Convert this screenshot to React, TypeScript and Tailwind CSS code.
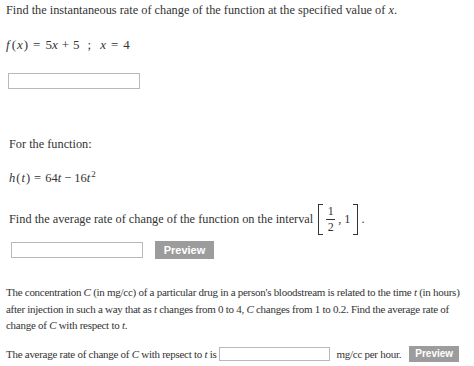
export default function App() {
  const serif = { fontFamily: '"Liberation Serif", "Times New Roman", serif' };
  const sans = { fontFamily: '"Liberation Sans", Arial, sans-serif' };
  return (
    <div className="w-[474px] h-[366px] bg-white text-[#333] text-[12.3px] leading-[16px] overflow-hidden" style={serif}>
      <div className="pl-[6px] pt-[2px]">
        <p>
          Find the instantaneous rate of change of the function at the specified value of <i>x</i>.
        </p>
        <p className="mt-[19px] text-[13px] whitespace-nowrap">
          <i className="mr-[2px]">f</i>(<i className="mx-[1px]">x</i>)<span className="mx-[5px]">=</span>5<i>x</i>
          <span className="mx-[4px]">+</span>5<span className="ml-[8px] mr-[9px]">;</span>
          <i>x</i><span className="mx-[5px]">=</span>4
        </p>
        <div className="mt-[20px] ml-[2px] w-[132px] h-[16px] border border-[#b8b8b8]" />
      </div>

      <div className="pl-[9px] mt-[47px]">
        <p>For the function:</p>
        <p className="mt-[18px] text-[12.5px] whitespace-nowrap">
          <i className="mr-[1px]">h</i>(<i className="mx-[1px]">t</i>)<span className="mx-[4px]">=</span>64<i>t</i>
          <span className="mx-[3px]">&minus;</span>16<i>t</i>
          <span className="relative -top-[5px] ml-[1px] text-[9px]">2</span>
        </p>
        <div className="mt-[17px] flex items-center whitespace-nowrap">
          <span>Find the average rate of change of the function on the interval</span>
          <span className="ml-[5px] inline-flex items-center h-[30px]">
            <span className="w-[5px] h-[31px] border-l-[1.5px] border-t border-b border-[#333]" />
            <span className="mx-[3px] inline-flex flex-col items-center text-[12px] leading-[11px]">
              <span>1</span>
              <span className="w-[9px] border-t border-[#333] my-[2px]" />
              <span>2</span>
            </span>
            <span className="text-[12px]">,</span>
            <span className="ml-[3px]">1</span>
            <span className="ml-[3px] w-[5px] h-[31px] border-r-[1.5px] border-t border-b border-[#333]" />
          </span>
          <span className="ml-[3px]">.</span>
        </div>
        <div className="mt-[7px] flex items-start">
          <div className="ml-[2px] mt-[1px] w-[132px] h-[16px] border border-[#b8b8b8]" />
          <button
            className="ml-[12px] w-[59px] h-[18px] bg-[#9c9c9c] text-white text-[11px] font-bold leading-[18px]"
            style={sans}
          >
            Preview
          </button>
        </div>
      </div>

      <div className="pl-[6px] mt-[25px] text-[11px] tracking-[-0.27px] whitespace-nowrap">
        <p className="leading-[16.5px]">
          The concentration <i>C</i> (in mg/cc) of a particular drug in a person's bloodstream is related to the time <i>t</i> (in hours)
          <br />
          after injection in such a way that as <i>t</i> changes from 0 to 4, <i>C</i> changes from 1 to 0.2. Find the average rate of
          <br />
          change of <i>C</i> with respect to <i>t</i>.
        </p>
        <div className="mt-[12px] flex items-center">
          <span>The average rate of change of <i>C</i> with repsect to <i>t</i> is</span>
          <div className="ml-[3px] w-[111px] h-[14px] border border-[#b8b8b8]" />
          <span className="ml-[6px]">mg/cc per hour.</span>
          <button
            className="ml-[8px] w-[50px] h-[16px] bg-[#9c9c9c] text-white text-[10px] font-bold leading-[16px] tracking-normal"
            style={sans}
          >
            Preview
          </button>
        </div>
      </div>
    </div>
  );
}
